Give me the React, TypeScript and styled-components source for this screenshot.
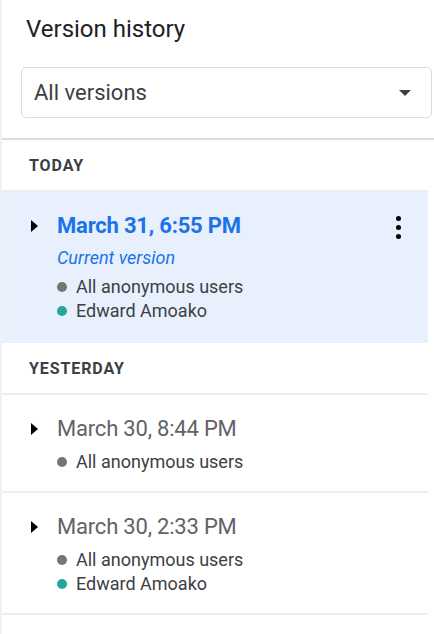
import React from 'react';
import styled, { createGlobalStyle } from 'styled-components';

type Editor = { name: string; color: string };
type Version = { title: string; current?: boolean; editors: Array<Editor> };
type Group = { label: string; versions: Array<Version> };

const anon: Editor = { name: 'All anonymous users', color: '#757575' };
const edward: Editor = { name: 'Edward Amoako', color: '#26a69a' };

const groups: Array<Group> = [
  { label: 'TODAY', versions: [{ title: 'March 31, 6:55 PM', current: true, editors: [anon, edward] }] },
  {
    label: 'YESTERDAY',
    versions: [
      { title: 'March 30, 8:44 PM', editors: [anon] },
      { title: 'March 30, 2:33 PM', editors: [anon, edward] },
    ],
  },
  { label: 'WEDNESDAY', versions: [] },
];

function App() {
  return (
    <>
      <GlobalStyle />
      <Panel>
        <Header>
          <Title>Version history</Title>
          <Select>
            <span>All versions</span>
            <Caret />
          </Select>
        </Header>
        <List>
          {groups.map((group) => (
            <section key={group.label}>
              <GroupLabel>{group.label}</GroupLabel>
              {group.versions.map((version) => (
                <Item key={version.title} $active={version.current}>
                  <Arrow />
                  <Body>
                    <ItemTitle $active={version.current}>{version.title}</ItemTitle>
                    {version.current && <Current>Current version</Current>}
                    {version.editors.map((editor) => (
                      <EditorRow key={editor.name}>
                        <Dot $color={editor.color} />
                        {editor.name}
                      </EditorRow>
                    ))}
                  </Body>
                  {version.current && (
                    <Kebab>
                      <i />
                      <i />
                      <i />
                    </Kebab>
                  )}
                </Item>
              ))}
            </section>
          ))}
        </List>
      </Panel>
    </>
  );
}

export default App;

const GlobalStyle = createGlobalStyle`
  html, body {
    margin: 0;
    padding: 0;
    background: #fff;
    overflow: hidden;
  }

  body {
    font-family: Roboto, 'Noto Sans', Arial, sans-serif;
  }
`;

const Panel = styled.div`
  width: 434px;
  height: 634px;
  overflow: hidden;
  border-left: 2px solid #eef1f6;
  box-sizing: border-box;
`;

const Header = styled.header`
  padding: 14px 2px 20px 19px;
  border-bottom: 2px solid #dadce0;
`;

const Title = styled.h1`
  margin: 0 0 0 5px;
  font-size: 24px;
  font-weight: 400;
  line-height: 30px;
  color: #202124;
`;

const Select = styled.div`
  margin-top: 23px;
  height: 51px;
  box-sizing: border-box;
  border: 1px solid #dadce0;
  border-radius: 5px;
  display: flex;
  align-items: center;
  justify-content: space-between;
  padding: 0 20px 0 12px;
  font-size: 22px;
  color: #3c4043;
`;

const Caret = styled.span`
  width: 0;
  height: 0;
  border-left: 6px solid transparent;
  border-right: 6px solid transparent;
  border-top: 6px solid #3c4043;
  margin-top: 1px;
`;

const List = styled.div`
  width: 426px;
`;

const GroupLabel = styled.div`
  height: 52px;
  display: flex;
  align-items: center;
  padding-left: 27px;
  font-size: 16px;
  font-weight: 700;
  color: #3c4043;
  letter-spacing: 0.9px;
  border-bottom: 2px solid #eeeeee;
  box-sizing: border-box;
`;

const Item = styled.div<{ $active?: boolean }>`
  display: flex;
  align-items: flex-start;
  padding: 19px 0 ${(p) => (p.$active ? 20 : 17)}px 29px;
  background: ${(p) => (p.$active ? '#e8f0fe' : '#fff')};
  border-bottom: ${(p) => (p.$active ? 'none' : '2px solid #eeeeee')};
`;

const Arrow = styled.span`
  width: 0;
  height: 0;
  margin-top: 9px;
  border-top: 6px solid transparent;
  border-bottom: 6px solid transparent;
  border-left: 7px solid #000;
`;

const Body = styled.div`
  flex: 1;
  margin-left: 19px;
`;

const ItemTitle = styled.div<{ $active?: boolean }>`
  font-size: 22px;
  line-height: 30px;
  font-weight: ${(p) => (p.$active ? 700 : 400)};
  color: ${(p) => (p.$active ? '#1a73e8' : '#5f6368')};
  letter-spacing: -0.2px;
  margin-bottom: 6px;
`;

const Current = styled.div`
  font-size: 18px;
  line-height: 24px;
  font-style: italic;
  color: #1a73e8;
  margin-top: -1px;
  margin-bottom: 5px;
`;

const EditorRow = styled.div`
  display: flex;
  align-items: center;
  font-size: 18px;
  line-height: 24px;
  color: #3c4043;
`;

const Dot = styled.span<{ $color: string }>`
  width: 10px;
  height: 10px;
  border-radius: 50%;
  background: ${(p) => p.$color};
  margin-right: 9px;
`;

const Kebab = styled.div`
  display: flex;
  flex-direction: column;
  gap: 4px;
  margin: 5px 27px 0 0;

  & > i {
    width: 5px;
    height: 5px;
    border-radius: 50%;
    background: #000;
  }
`;
